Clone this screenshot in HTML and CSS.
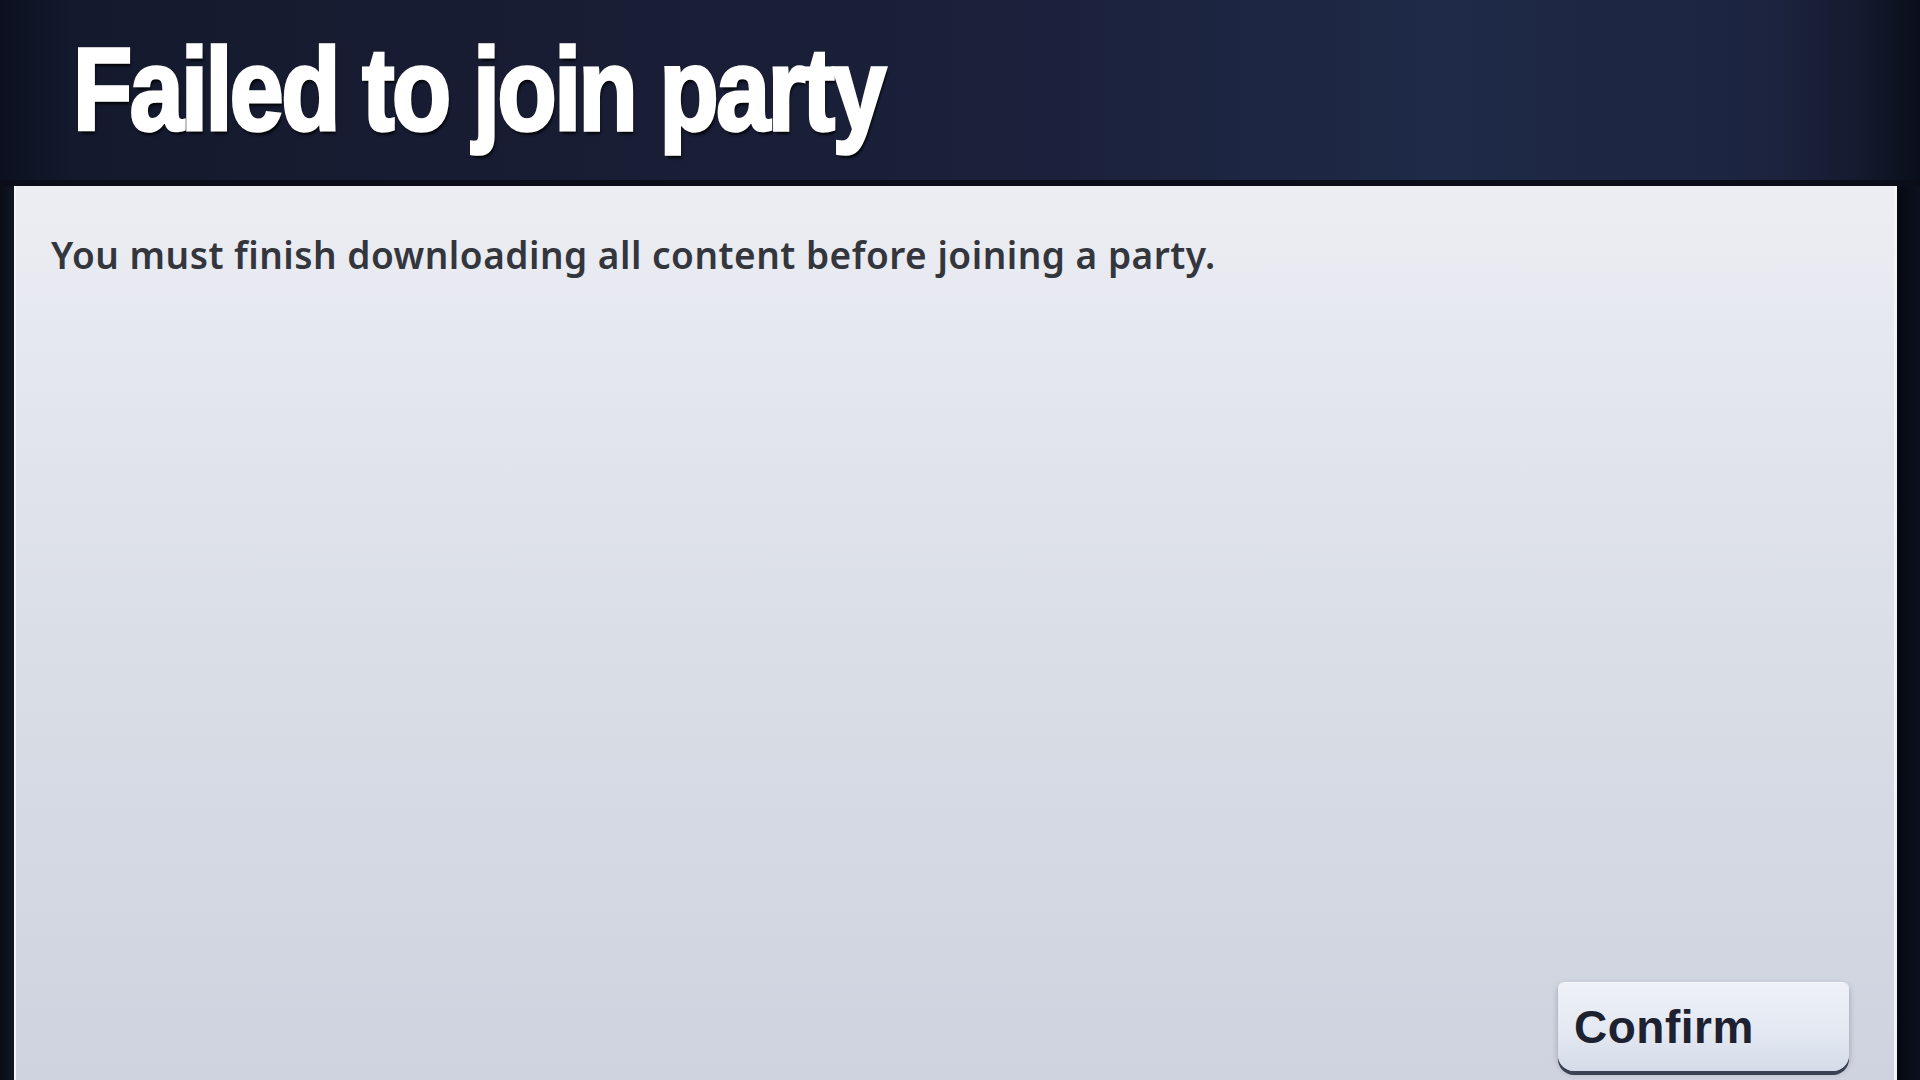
FILE: index.html
```html
<!DOCTYPE html>
<html lang="en">
<head>
<meta charset="utf-8">
<title>Failed to join party</title>
<link rel="stylesheet" href="styles.css">
</head>
<body>
<div class="screen">
  <header class="header">
    <h1 class="title">Failed to join party</h1>
  </header>
  <div class="stage">
    <div class="gutter-left"></div>
    <main class="panel">
      <p class="message">You must finish downloading all content before joining a party.</p>
      <div class="actions">
        <button class="confirm" type="button">Confirm</button>
      </div>
    </main>
    <div class="gutter-right"></div>
  </div>
</div>
</body>
</html>
```

FILE: styles.css
```css
html, body {
  margin: 0;
  padding: 0;
  width: 1920px;
  height: 1080px;
  overflow: hidden;
  background: #0c1020;
}

.screen {
  width: 1920px;
  height: 1080px;
  display: flex;
  flex-direction: column;
}

.header {
  height: 186px;
  flex: 0 0 186px;
  background: linear-gradient(90deg, #0c1020 0%, #141a2e 4%, #191d34 30%, #1b213c 55%, #1e2a47 75%, #1c2440 92%, #141a2e 97%, #0a0e1a 100%);
  padding-left: 73px;
  box-sizing: border-box;
  display: flex;
  align-items: flex-start;
  border-bottom: 6px solid #0b0e18;
}

.title {
  margin: 21px 0 0 0;
  font-family: "Liberation Sans", Arial, sans-serif;
  font-weight: 700;
  font-size: 116px;
  line-height: 1.2;
  letter-spacing: -3px;
  color: #ffffff;
  -webkit-text-stroke: 3.5px #ffffff;
  transform: scaleX(0.835);
  transform-origin: left top;
  white-space: nowrap;
  text-shadow: 2px 4px 3px rgba(0, 0, 0, 0.85);
}

.stage {
  flex: 1;
  display: flex;
  min-height: 0;
}

.gutter-left {
  flex: 0 0 14px;
  background: linear-gradient(90deg, #0a0d17, #111625);
}

.gutter-right {
  flex: 0 0 23px;
  background: linear-gradient(90deg, #060912, #0c111e);
}

.panel {
  flex: 1;
  display: flex;
  flex-direction: column;
  background: linear-gradient(180deg, #eceef3 0%, #e4e7ee 20%, #d9dde6 55%, #cfd3df 100%);
  box-shadow: inset 2px 0 0 #f4f6fa, inset -3px 0 0 #f2f4f8;
  padding: 0 48px 9px 37px;
  box-sizing: border-box;
}

.message {
  margin: 47px 0 0 0;
  font-family: "Noto Sans", "Open Sans", sans-serif;
  font-weight: 600;
  font-size: 37px;
  line-height: 1.2;
  letter-spacing: 0.5px;
  color: #34363d;
}

.actions {
  margin-top: auto;
  display: flex;
  justify-content: flex-end;
}

.confirm {
  width: 291px;
  height: 88px;
  border: none;
  border-radius: 6px 6px 16px 16px;
  background: linear-gradient(180deg, #eef1f7 0%, #e3e8f2 55%, #d5dbe8 100%);
  box-shadow: 0 4px 0 #3b4152, 0 -1px 0 #f5f7fb, 0 2px 6px rgba(0,0,0,0.25);
  font-family: "Liberation Sans", Arial, sans-serif;
  font-weight: 700;
  font-size: 46px;
  color: #1d2130;
  text-align: left;
  padding: 0 0 0 16px;
  letter-spacing: 0.5px;
}
```
